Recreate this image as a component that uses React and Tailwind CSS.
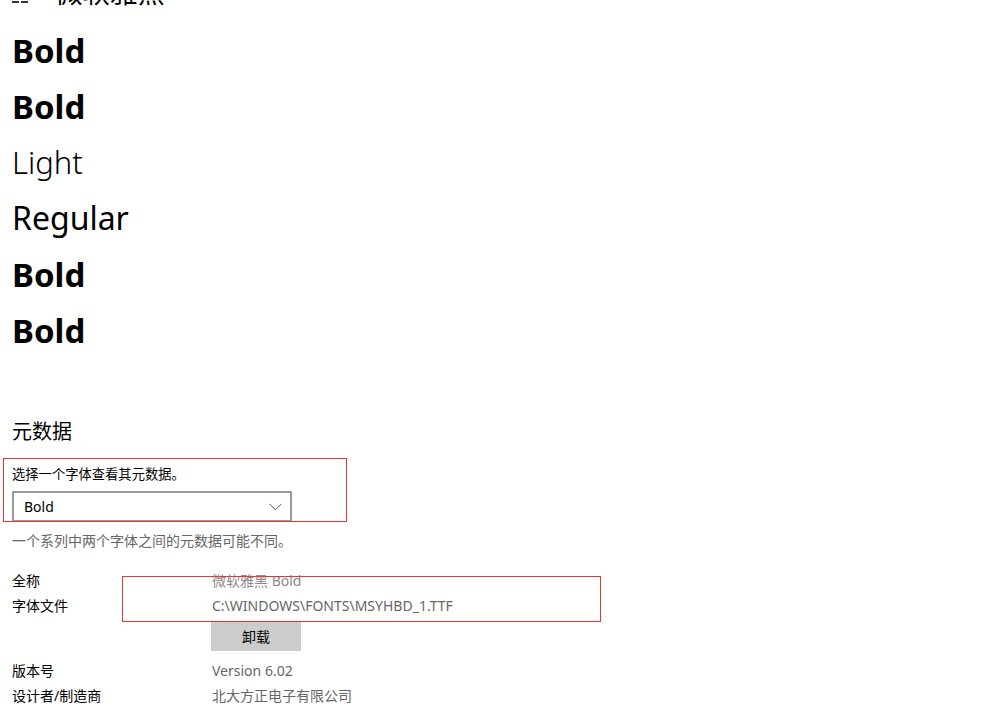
import React from "react";

const font = { fontFamily: '"Noto Sans", "Noto Sans CJK SC", sans-serif' };

function Sample({ children, weight, size }) {
  return (
    <div className={`h-[56px] flex items-center leading-none text-black ${size} ${weight}`}>
      {children}
    </div>
  );
}

function Row({ label, value, light }) {
  return (
    <div className="flex h-[25px] items-center text-[14px]">
      <div className="w-[200px] text-black">{label}</div>
      <div className={light ? "text-[#8a8a8a]" : "text-[#666666]"}>{value}</div>
    </div>
  );
}

export default function App() {
  return (
    <div className="relative w-[986px] h-[709px] overflow-hidden bg-white" style={font}>
      <div className="px-[12px]">
        {/* cut-off heading row */}
        <div className="h-[6px] overflow-hidden">
          <div className="flex items-start mt-[-21px] h-[28px]">
            <div className="flex gap-[2px] mt-[22px] w-[16px] shrink-0">
              <span className="block w-[7px] h-[2px] bg-[#333]" />
              <span className="block w-[7px] h-[2px] bg-[#333]" />
            </div>
            <span className="ml-[27px] text-[27.5px] leading-none text-black whitespace-nowrap">微软雅黑</span>
          </div>
        </div>

        <div className="mt-[16px]">
          <Sample weight="font-bold" size="text-[33px]">Bold</Sample>
          <Sample weight="font-bold" size="text-[33px]">Bold</Sample>
          <Sample weight="font-light" size="text-[31px]">Light</Sample>
          <Sample weight="font-normal" size="text-[32px]">Regular</Sample>
          <Sample weight="font-bold" size="text-[33px]">Bold</Sample>
          <Sample weight="font-bold" size="text-[33px]">Bold</Sample>
        </div>

        <div className="mt-[64px] text-[20px] leading-none text-black">元数据</div>

        <div className="mt-[26px] text-[13.3px] leading-none text-black">选择一个字体查看其元数据。</div>

        <div className="mt-[10px] w-[280px] h-[31px] border-2 border-[#999999] flex items-center justify-between pl-[10px] pr-[8px]">
          <span className="text-[14px] text-black">Bold</span>
          <svg width="13" height="8" viewBox="0 0 13 8" fill="none">
            <path d="M0.5 0.8 L6.5 6.8 L12.5 0.8" stroke="#555" strokeWidth="1" />
          </svg>
        </div>

        <div className="mt-[12px] text-[14px] leading-none text-[#666666]">一个系列中两个字体之间的元数据可能不同。</div>

        <div className="mt-[20px]">
          <Row label="全称" value="微软雅黑 Bold" light />
          <Row label="字体文件" value="C:\WINDOWS\FONTS\MSYHBD_1.TTF" />
          <div className="flex mt-[3px]">
            <div className="w-[199px]" />
            <div className="w-[90px] h-[30px] bg-[#cccccc] flex items-center justify-center text-[14px] text-black">卸载</div>
          </div>
          <div className="mt-[7px]">
            <Row label="版本号" value="Version 6.02" />
            <Row label="设计者/制造商" value="北大方正电子有限公司" />
          </div>
        </div>
      </div>

      {/* annotation boxes */}
      <div className="absolute left-[3px] top-[458px] w-[344px] h-[64px] border border-[#ee3333] pointer-events-none" />
      <div className="absolute left-[122px] top-[576px] w-[479px] h-[46px] border border-[#ee3333] pointer-events-none" />
    </div>
  );
}
